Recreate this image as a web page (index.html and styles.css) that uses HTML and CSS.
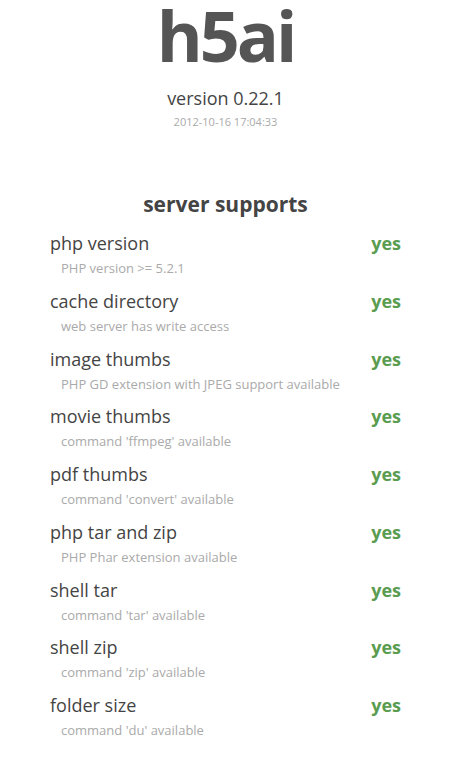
FILE: index.html
```html
<!DOCTYPE html>
<html>
<head>
<meta charset="utf-8">
<link rel="stylesheet" href="styles.css">
</head>
<body>
<div class="page">
  <header class="head">
    <h1 class="logo">h5ai</h1>
    <div class="version">version 0.22.1</div>
    <div class="date">2012-10-16 17:04:33</div>
  </header>
  <h2 class="section">server supports</h2>
  <ul class="tests">
    <li class="test"><div class="row"><span class="label">php version</span><span class="result">yes</span></div><div class="info">PHP version &gt;= 5.2.1</div></li>
    <li class="test"><div class="row"><span class="label">cache directory</span><span class="result">yes</span></div><div class="info">web server has write access</div></li>
    <li class="test"><div class="row"><span class="label">image thumbs</span><span class="result">yes</span></div><div class="info">PHP GD extension with JPEG support available</div></li>
    <li class="test"><div class="row"><span class="label">movie thumbs</span><span class="result">yes</span></div><div class="info">command 'ffmpeg' available</div></li>
    <li class="test"><div class="row"><span class="label">pdf thumbs</span><span class="result">yes</span></div><div class="info">command 'convert' available</div></li>
    <li class="test"><div class="row"><span class="label">php tar and zip</span><span class="result">yes</span></div><div class="info">PHP Phar extension available</div></li>
    <li class="test"><div class="row"><span class="label">shell tar</span><span class="result">yes</span></div><div class="info">command 'tar' available</div></li>
    <li class="test"><div class="row"><span class="label">shell zip</span><span class="result">yes</span></div><div class="info">command 'zip' available</div></li>
    <li class="test"><div class="row"><span class="label">folder size</span><span class="result">yes</span></div><div class="info">command 'du' available</div></li>
  </ul>
</div>
</body>
</html>
```
FILE: styles.css
```css
html, body {
  margin: 0;
  padding: 0;
  background: #fff;
}
body {
  font-family: "Open Sans", "Noto Sans", sans-serif;
  color: #555;
}
.page {
  width: 351px;
  margin-left: 50px;
}
.head {
  text-align: center;
}
.logo {
  margin: 0;
  font-size: 70px;
  line-height: 70px;
  font-weight: 700;
  letter-spacing: -3px;
  color: #555;
}
.version {
  margin-top: 17px;
  font-size: 18px;
  line-height: 22px;
  color: #444;
}
.date {
  margin-top: 6px;
  font-size: 11px;
  line-height: 14px;
  color: #aaa;
}
.section {
  margin: 62px 0 0;
  text-align: center;
  font-size: 21px;
  line-height: 26px;
  font-weight: 700;
  color: #444;
}
.tests {
  list-style: none;
  margin: 13px 0 0;
  padding: 0;
}
.test {
  height: 57.75px;
}
.row {
  display: flex;
  justify-content: space-between;
  align-items: baseline;
}
.label {
  font-size: 18px;
  line-height: 26px;
  color: #444;
}
.result {
  font-size: 18px;
  line-height: 26px;
  font-weight: 700;
  color: #5a9c50;
}
.info {
  padding-top: 3px;
  padding-left: 11px;
  font-size: 13px;
  line-height: 18px;
  color: #aaa;
}
```
